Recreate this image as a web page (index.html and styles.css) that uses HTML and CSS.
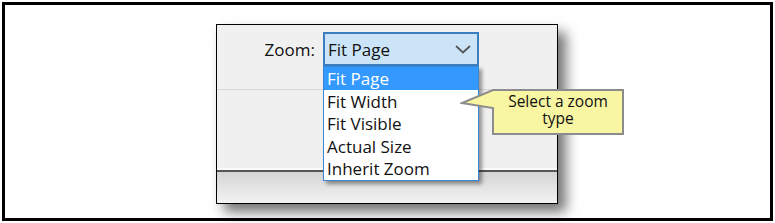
FILE: index.html
```html
<!DOCTYPE html>
<html lang="en">
<head>
  <meta charset="UTF-8">
  <title>Zoom type</title>
  <link rel="stylesheet" href="styles.css">
</head>
<body>
  <div class="marco">
    <div class="ventana">
      <div class="barra">
        <span class="etiqueta">Zoom:</span>
        <div class="combo">
          <span>Fit Page</span>
          <svg class="flecha" width="16" height="9" viewBox="0 0 16 9">
            <polyline points="1,1 8,7.5 15,1" fill="none" stroke="#555" stroke-width="1.8"/>
          </svg>
        </div>
      </div>
      <div class="linea"></div>
      <div class="pie"></div>

      <ul class="lista">
        <li class="activo">Fit Page</li>
        <li>Fit Width</li>
        <li>Fit Visible</li>
        <li>Actual Size</li>
        <li>Inherit Zoom</li>
      </ul>

      <div class="globo">
        <svg class="globo-forma" width="166" height="48" viewBox="0 0 166 48">
          <path d="M33,2 H163 V46 H33 V20 L2,15 L33,2 Z" fill="#f8f5a3" stroke="#8c8c8c" stroke-width="2"/>
        </svg>
        <p class="globo-texto">Select a zoom type</p>
      </div>
    </div>
  </div>
</body>
</html>
```

FILE: styles.css
```css
body {
  margin: 0;
  background: #fff;
  font-family: "Open Sans", "Noto Sans", sans-serif;
  color: #111;
}
.marco {
  margin: 2px;
  width: 765px;
  height: 213px;
  border: 3px solid #000;
}
.ventana {
  position: relative;
  margin: 19px 0 0 211px;
  width: 340px;
  height: 178px;
  border: 1px solid #000;
  background: #f0f0f0;
  box-shadow: 8px 8px 12px rgba(0, 0, 0, 0.55);
  display: flex;
  flex-direction: column;
}
.barra {
  display: flex;
  align-items: center;
  padding-top: 7px;
}
.etiqueta {
  width: 98px;
  margin-right: 8px;
  text-align: right;
  font-size: 17px;
}
.combo {
  box-sizing: border-box;
  width: 156px;
  height: 34px;
  border: 2px solid #3c7dbf;
  background: #cce4f7;
  padding: 0 6px 0 3px;
  display: flex;
  align-items: center;
  justify-content: space-between;
  font-size: 17px;
}
.linea {
  margin-top: 23px;
  border-top: 1px solid #d8d8d8;
}
.pie {
  margin-top: auto;
  height: 31px;
  border-top: 2px solid #555;
  box-shadow: 0 -2px 0 #fbfbfb;
  background: linear-gradient(#d4d4d4, #f3f3f3);
}
.lista {
  position: absolute;
  left: 106px;
  top: 41px;
  width: 154px;
  margin: 0;
  padding: 0;
  list-style: none;
  background: #fff;
  border: 1px solid #3a87d8;
  box-shadow: 3px 3px 4px rgba(0, 0, 0, 0.4);
}
.lista li {
  height: 22.6px;
  line-height: 22.6px;
  padding: 1px 0 0 3px;
  box-sizing: border-box;
  font-size: 17px;
}
.lista .activo {
  background: #3399ff;
  color: #fff;
}
.globo {
  position: absolute;
  left: 243px;
  top: 63px;
  width: 166px;
  height: 48px;
}
.globo-forma {
  position: absolute;
  left: 0;
  top: 0;
}
.globo-texto {
  position: relative;
  margin: 0;
  padding: 5px 0 0 33px;
  width: 130px;
  text-align: center;
  font-size: 15.5px;
  line-height: 17px;
}
```
